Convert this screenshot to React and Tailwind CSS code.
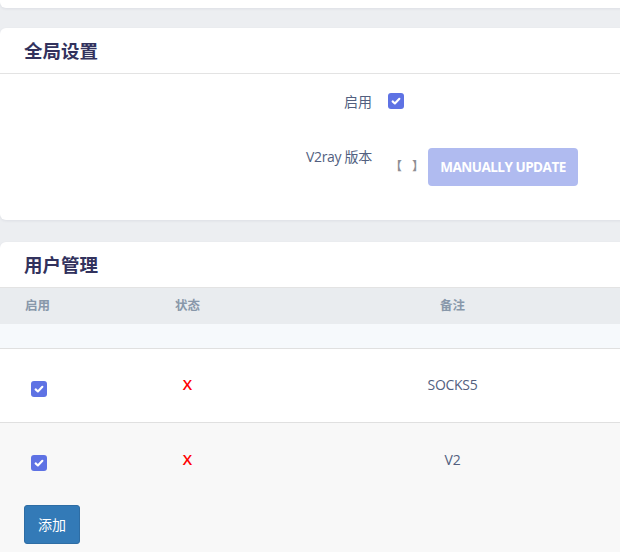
import React, { useState } from 'react';

const Check = ({ checked, onChange, className = '' }) => (
    <button
        type="button"
        onClick={onChange}
        className={`w-4 h-4 rounded-[3px] flex items-center justify-center ${checked ? 'bg-[#5e72e4]' : 'bg-white border border-[#cad1d7]'} ${className}`}
    >
        {checked && (
            <svg viewBox="0 0 16 16" className="w-3 h-3">
                <path d="M3.5 8.5l3 2.8L12.5 5" fill="none" stroke="white" strokeWidth="2.8" strokeLinecap="round" strokeLinejoin="round" />
            </svg>
        )}
    </button>
);

const users = [
    { id: 1, enabled: true, remark: 'SOCKS5' },
    { id: 2, enabled: true, remark: 'V2' },
];

const App = () => {
    const [enabled, setEnabled] = useState(true);
    const [rows, setRows] = useState(users);

    const toggleRow = (id) => {
        setRows(rows.map((r) => (r.id === id ? { ...r, enabled: !r.enabled } : r)));
    };

    return (
        <div
            className="w-[620px] h-[552px] overflow-hidden bg-[#eceef1]"
            style={{ fontFamily: '"Open Sans", "Noto Sans CJK SC", sans-serif' }}
        >
            {/* previous card, only its bottom edge shows */}
            <div className="w-[680px] h-[8px] bg-white rounded-b-md shadow-[0_1px_3px_rgba(50,50,93,0.08)]" />

            {/* Global settings */}
            <div className="w-[680px] h-[192px] mt-[20px] bg-white rounded-md shadow-[0_1px_3px_rgba(50,50,93,0.08)]">
                <div className="h-[46px] px-6 flex items-center border-b border-[#e3e3e3]">
                    <h2 className="text-[18.5px] font-bold text-[#32325d]">全局设置</h2>
                </div>
                <div className="pt-[19px]">
                    <div className="flex items-center h-4">
                        <label className="w-[372px] text-right text-[14px] text-[#525f7f]">启用</label>
                        <Check checked={enabled} onChange={() => setEnabled(!enabled)} className="ml-4" />
                    </div>
                    <div className="flex items-start mt-[39px]">
                        <label className="w-[372px] text-right text-[14px] leading-[18px] tracking-[-0.3px] text-[#525f7f]">V2ray 版本</label>
                        <div className="ml-4 flex items-center h-[38px]">
                            <span className="flex items-center text-[12px] font-bold text-[#8e8e93] w-[40px]">
                                <span className="w-[14px] text-right">【</span>
                                <span className="w-[14px] ml-[10px]">】</span>
                            </span>
                            <button
                                type="button"
                                disabled
                                className="h-[38px] w-[150px] rounded-[4px] bg-[#b0bbf0] text-white text-[13.5px] font-bold uppercase tracking-[-0.5px]"
                            >
                                Manually Update
                            </button>
                        </div>
                    </div>
                </div>
            </div>

            {/* User management */}
            <div className="w-[680px] mt-[22px] bg-white rounded-md shadow-[0_1px_3px_rgba(50,50,93,0.08)] overflow-hidden">
                <div className="h-[46px] px-6 flex items-center border-b border-[#e3e3e3]">
                    <h2 className="text-[18.5px] font-bold text-[#32325d]">用户管理</h2>
                </div>
                <div className="grid grid-cols-[150px_75px_455px] h-[36px] items-center bg-[#e9ecef] text-[12.5px] font-semibold text-[#8898aa]">
                    <div className="pl-[25px]">启用</div>
                    <div className="text-center">状态</div>
                    <div className="text-center">备注</div>
                </div>
                <div className="h-[25px] bg-[#f6f9fc] border-b border-[#e0e0e0]" />
                {rows.map((r, i) => (
                    <div
                        key={r.id}
                        className={`grid grid-cols-[150px_75px_455px] h-[74px] items-center text-[14px] text-[#525f7f] ${i === 0 ? 'bg-white border-b border-[#e0e0e0]' : 'bg-[#f8f8f8]'}`}
                    >
                        <div className="pl-[31px]">
                            <Check checked={r.enabled} onChange={() => toggleRow(r.id)} className="mt-[6px]" />
                        </div>
                        <div className="text-center text-[15px] font-semibold text-[#ff0000] -mt-[2px]">X</div>
                        <div className="text-center tracking-[-0.3px] -mt-[2px]">{r.remark}</div>
                    </div>
                ))}
                <div className="bg-[#f8f8f8] px-6 pt-[8px] pb-6">
                    <button
                        type="button"
                        className="h-[39px] px-[13px] rounded-[3px] bg-[#337ab7] text-white text-[14px] border border-[#2e6da4]"
                    >
                        添加
                    </button>
                </div>
            </div>
        </div>
    );
};

export default App;
